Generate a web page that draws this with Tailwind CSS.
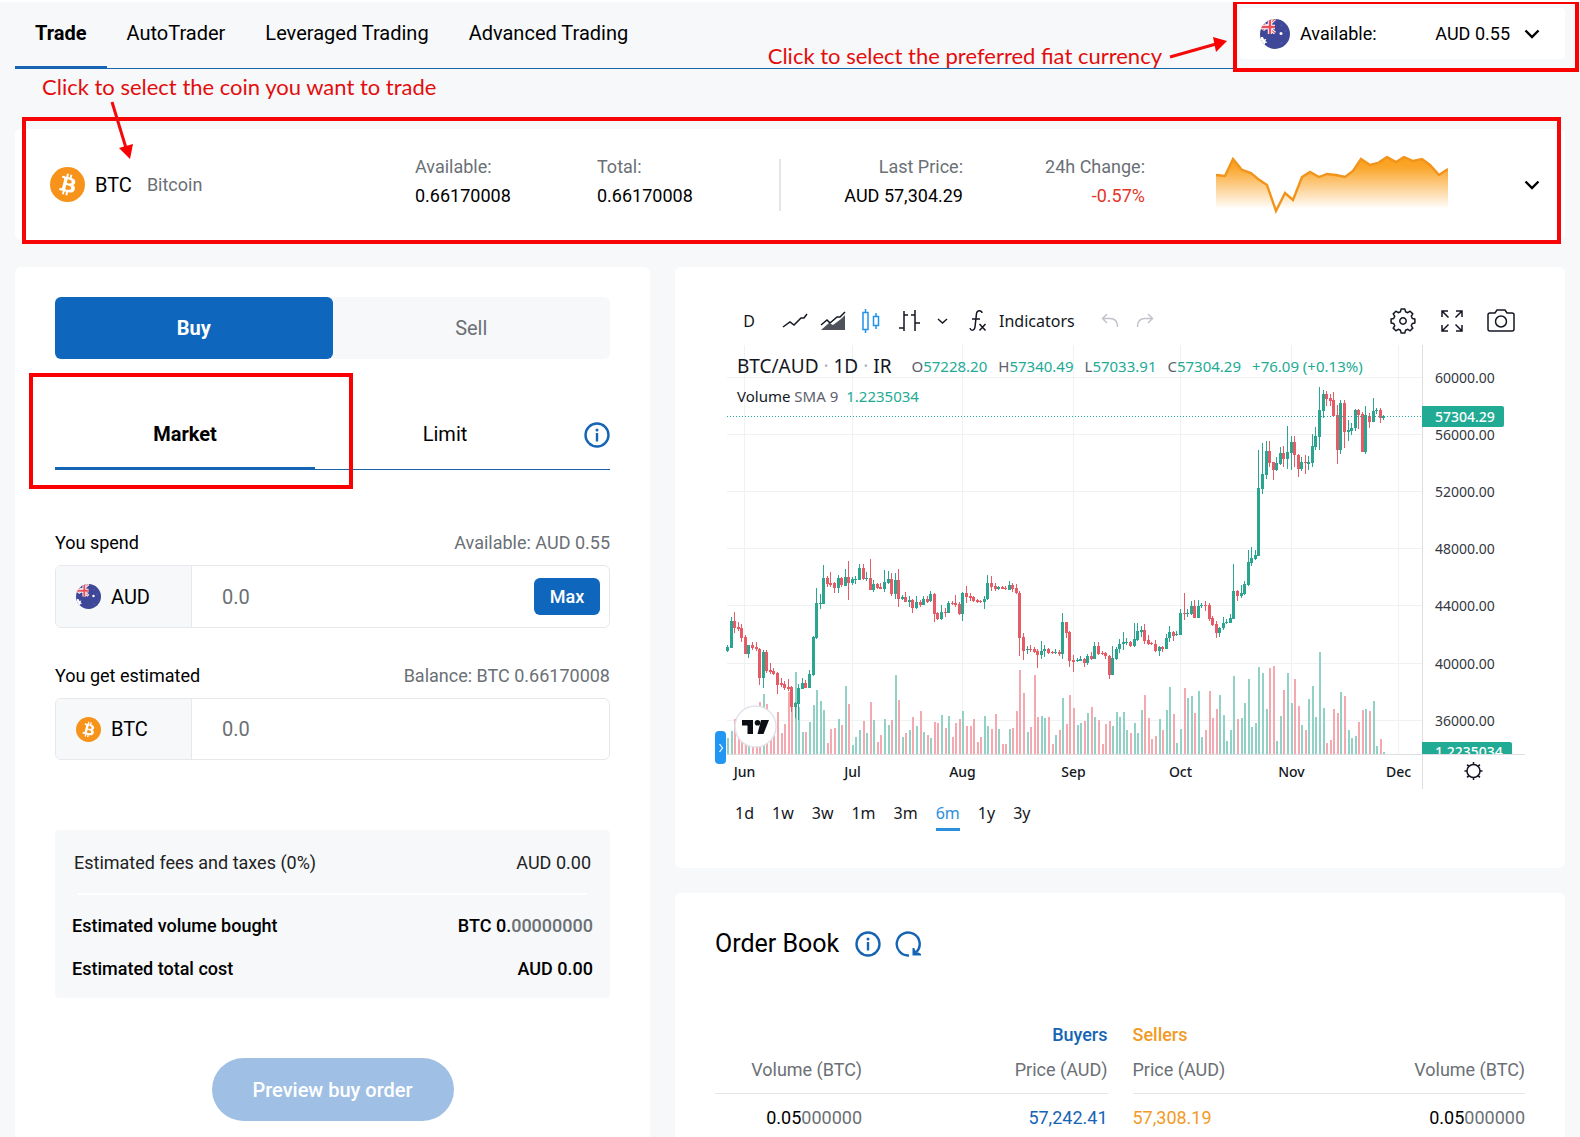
<!DOCTYPE html>
<html lang="en">
<head>
    <meta charset="UTF-8">
    <meta name="viewport" content="width=device-width, initial-scale=1.0">
    <title>Trade BTC/AUD</title>
    <script src="https://cdn.jsdelivr.net/npm/@tailwindcss/browser@4"></script>
</head>
<body class="bg-[#f6f8fa] min-h-screen border-t-2 border-white font-['Roboto',sans-serif] text-lg text-black">

    <!-- shared icons -->
    <svg class="hidden">
        <symbol id="icon-btc" viewBox="0 0 32 32">
            <circle cx="16" cy="16" r="16" fill="#f7931a"/>
            <path fill="#fff" d="M23.189 14.02c.314-2.096-1.283-3.223-3.465-3.975l.708-2.84-1.728-.43-.69 2.765c-.454-.114-.92-.22-1.385-.326l.695-2.783L15.596 6l-.708 2.839c-.376-.086-.746-.17-1.104-.26l.002-.009-2.384-.595-.46 1.846s1.283.294 1.256.312c.7.175.826.638.805 1.006l-.806 3.235c.048.012.11.03.18.057l-.183-.045-1.13 4.532c-.086.212-.303.531-.793.41.018.025-1.256-.313-1.256-.313l-.858 1.978 2.25.561c.418.105.828.215 1.231.318l-.715 2.872 1.727.43.708-2.84c.472.127.93.245 1.378.357l-.706 2.828 1.728.43.715-2.866c2.948.558 5.164.333 6.097-2.333.752-2.146-.037-3.385-1.588-4.192 1.13-.26 1.98-1.003 2.207-2.538zm-3.95 5.538c-.533 2.147-4.148.986-5.32.695l.95-3.805c1.172.293 4.929.872 4.37 3.11zm.535-5.569c-.487 1.953-3.495.96-4.47.717l.86-3.45c.975.243 4.118.696 3.61 2.733z"/>
        </symbol>
        <symbol id="icon-aud" viewBox="0 0 30 30">
            <rect width="30" height="30" fill="#3f4798"/>
            <path d="M0 2l15 12M15 0L3 11" stroke="#fff" stroke-width="3"/>
            <path d="M0 2l15 12M15 0L3 11" stroke="#e25b68" stroke-width="1.2"/>
            <path d="M10 0v15M0 8h15" stroke="#fff" stroke-width="4.4"/>
            <path d="M10 0v15M0 8h15" stroke="#e8505b" stroke-width="2.4"/>
            <path d="M3 18l1 2.400 2.400-.6-1 2.200 2 1.400-2.400.6v2.400L3 24.800l-2 1.600V18z" fill="#fff"/>
            <circle cx="21" cy="14.500" r="1.500" fill="#fff"/>
            <circle cx="25.500" cy="12" r=".7" fill="#5f69b4"/>
            <circle cx="21.500" cy="24" r=".8" fill="#5f69b4"/>
            <circle cx="21.500" cy="6.500" r=".8" fill="#5f69b4"/>
        </symbol>
        <symbol id="icon-info" viewBox="0 0 26 26">
            <circle cx="13" cy="13" r="11.500" fill="none" stroke="#1565b4" stroke-width="2.400"/>
            <circle cx="13" cy="8" r="1.500" fill="#1565b4"/>
            <path d="M13 11v8.500" stroke="#1565b4" stroke-width="2.400"/>
        </symbol>
        <symbol id="icon-chevron" viewBox="0 0 16 10">
            <path d="M1.500 1.500L8 8l6.500-6.500" fill="none" stroke="#000" stroke-width="2.400"/>
        </symbol>
    </svg>

    <header class="relative flex items-start px-[15px]">
        <nav class="flex-1 mr-[7px] h-[67px] flex items-end border-b border-[#1565a8] text-xl">
            <a href="#" aria-current="page" class="h-[67px] px-5 pt-[17px] -mb-px border-b-3 border-[#1565b4] font-bold">Trade</a>
            <a href="#" class="h-[67px] px-5 pt-[17px] -mb-px">AutoTrader</a>
            <a href="#" class="h-[67px] px-5 pt-[17px] -mb-px">Leveraged Trading</a>
            <a href="#" class="h-[67px] px-5 pt-[17px] -mb-px">Advanced Trading</a>
        </nav>
        <div class="relative mt-[6px]">
            <button type="button" class="w-[325px] h-[51px] bg-white rounded flex items-center pl-5 pr-[25px]">
                <svg class="size-[30px] rounded-full"><use href="#icon-aud"/></svg>
                <span class="ml-[10px]">Available:</span>
                <span class="ml-auto">AUD 0.55</span>
                <svg class="w-4 h-[10px] ml-[14px]"><use href="#icon-chevron"/></svg>
            </button>
            <div class="absolute -top-2 -bottom-[13px] -left-[7px] -right-[14px] border-4 border-[#fb0000] pointer-events-none"></div>
        </div>

        <!-- help notes -->
        <p class="absolute left-[42px] top-[69px] leading-8 text-[22px] font-['Lato',sans-serif] text-[#e30d0d] whitespace-nowrap">Click to select the coin you want to trade</p>
        <p class="absolute right-[418px] top-[38px] leading-8 text-[22px] font-['Lato',sans-serif] text-[#e30d0d] whitespace-nowrap">Click to select the preferred fiat currency</p>
        <svg class="absolute left-[110px] top-[98px] w-6 h-[60px] z-10" viewBox="0 0 24 60">
            <path d="M2 2l14 46" stroke="#f40a0a" stroke-width="3"/>
            <path d="M9 48l14-4-3 15z" fill="#fb0000"/>
        </svg>
        <svg class="absolute right-[352px] top-[34px] w-[60px] h-6" viewBox="0 0 60 24">
            <path d="M2 21l46-13" stroke="#f40a0a" stroke-width="3"/>
            <path d="M45 1l14 4-11 11z" fill="#fb0000"/>
        </svg>
    </header>

    <main class="px-[15px] mt-[60px]">
        <section class="relative h-[111px] bg-white rounded-md pl-[35px] pr-[25px] grid items-center grid-cols-[365fr_182fr_182fr_2px_182fr_182fr_303fr_92fr]">
            <div class="flex items-center">
                <svg class="size-[35px]"><use href="#icon-btc"/></svg>
                <span class="ml-[10px] text-xl">BTC</span>
                <span class="ml-[15px] text-[#6b7075]">Bitcoin</span>
            </div>
            <div class="pb-2">
                <p class="leading-[29px] text-[#6b7075]">Available:</p>
                <p class="leading-[29px]">0.66170008</p>
            </div>
            <div class="pb-2">
                <p class="leading-[29px] text-[#6b7075]">Total:</p>
                <p class="leading-[29px]">0.66170008</p>
            </div>
            <div class="h-[52px] bg-[#e4e5e7]"></div>
            <div class="pb-2 text-right">
                <p class="leading-[29px] text-[#6b7075]">Last Price:</p>
                <p class="leading-[29px]">AUD 57,304.29</p>
            </div>
            <div class="pb-2 text-right">
                <p class="leading-[29px] text-[#6b7075]">24h Change:</p>
                <p class="leading-[29px] text-[#e53528]">-0.57%</p>
            </div>
            <svg class="ml-auto w-[232px] h-[58px]" viewBox="0 0 232 58">
                <linearGradient id="spark" x1="0" y1="0" x2="0" y2="1">
                    <stop offset="0" stop-color="#fb9f16"/>
                    <stop offset=".2" stop-color="#fba62c"/>
                    <stop offset="1" stop-color="#fff"/>
                </linearGradient>
                <path fill="url(#spark)" d="M0 53V19L9 20L17 3L26 14L35 17L42 23L51 29L58 53H62L69 37L77 44L86 21L94 16L103 21L111 18L120 19L129 21L137 15L145 3L154 9L162 7L171 1L180 6L188 1L197 5L206 3L214 9L223 19L232 13V53Z"/>
                <path fill="none" stroke="#f0941c" stroke-width="2.400" d="M0 19L9 20L17 3L26 14L35 17L42 23L51 29L60 55L69 37L77 44L86 21L94 16L103 21L111 18L120 19L129 21L137 15L145 3L154 9L162 7L171 1L180 6L188 1L197 5L206 3L214 9L223 19L232 13"/>
            </svg>
            <button type="button" aria-label="Select coin" class="justify-self-end"><svg class="w-4 h-[10px]"><use href="#icon-chevron"/></svg></button>
            <div class="absolute -top-3 -bottom-1 left-[7px] right-1 border-4 border-[#f60606] pointer-events-none"></div>
        </section>

        <div class="mt-[27px] grid grid-cols-[635fr_890fr] gap-[25px]">
            <!-- order form -->
            <form class="bg-white rounded-md px-10 pt-[30px] pb-10">
                <div class="grid grid-cols-2 h-[62px] rounded-md bg-[#f6f8fa] text-xl">
                    <button type="button" class="rounded-md bg-[#0f66bd] text-white font-bold">Buy</button>
                    <button type="button" class="text-[#6b7075]">Sell</button>
                </div>

                <div class="relative mt-10 h-[71px] flex border-b border-[#1565a8] text-xl">
                    <button type="button" class="w-[260px] pt-[2px] -mb-px border-b-3 border-[#1565b4] font-bold">Market</button>
                    <button type="button" class="w-[260px] pt-[2px] border-b-2 border-transparent">Limit</button>
                    <button type="button" aria-label="Order type info" class="ml-auto pt-[2px]"><svg class="size-[26px]"><use href="#icon-info"/></svg></button>
                    <div class="absolute -left-[26px] -top-[26px] w-[324px] h-[116px] border-4 border-[#fb0000] pointer-events-none"></div>
                </div>

                <div class="mt-[57px] flex justify-between leading-8">
                    <label for="spend">You spend</label>
                    <span class="text-[#6b7075]">Available: AUD 0.55</span>
                </div>
                <div class="mt-[6px] h-[63px] flex items-center border border-[#e6e8eb] rounded-md overflow-hidden text-xl">
                    <div class="w-[136px] h-full flex items-center pl-5 bg-[#f6f8fa] border-r border-[#e6e8eb]">
                        <svg class="size-[25px] rounded-full"><use href="#icon-aud"/></svg>
                        <span class="ml-[10px]">AUD</span>
                    </div>
                    <input type="text" id="spend" placeholder="0.0" class="flex-1 min-w-0 h-full pl-[30px] placeholder-[#6b7075] outline-none">
                    <button type="button" class="w-[66px] h-[37px] mr-[9px] rounded-md bg-[#0f66bd] text-white text-lg font-medium">Max</button>
                </div>

                <div class="mt-8 flex justify-between leading-8">
                    <label for="receive">You get estimated</label>
                    <span class="text-[#6b7075]">Balance: BTC 0.66170008</span>
                </div>
                <div class="mt-[6px] h-[62px] flex items-center border border-[#e6e8eb] rounded-md overflow-hidden text-xl">
                    <div class="w-[136px] h-full flex items-center pl-5 bg-[#f6f8fa] border-r border-[#e6e8eb]">
                        <svg class="size-[25px]"><use href="#icon-btc"/></svg>
                        <span class="ml-[10px]">BTC</span>
                    </div>
                    <input type="text" id="receive" placeholder="0.0" class="flex-1 min-w-0 h-full pl-[30px] placeholder-[#6b7075] outline-none">
                </div>

                <div class="mt-[70px] rounded bg-[#f6f8fa] px-[17px] pt-[17px] pb-2">
                    <div class="flex justify-between px-[2px] leading-8 text-[#222]">
                        <span>Estimated fees and taxes (0%)</span>
                        <span>AUD 0.00</span>
                    </div>
                    <div class="mx-[6px] mt-[14px] mb-[9px] h-[2px] bg-white"></div>
                    <div class="flex justify-between leading-[43px] font-medium">
                        <span>Estimated volume bought</span>
                        <span>BTC 0.<span class="text-[#6b7075]">00000000</span></span>
                    </div>
                    <div class="flex justify-between leading-[43px] font-medium">
                        <span>Estimated total cost</span>
                        <span>AUD 0.00</span>
                    </div>
                </div>

                <button type="submit" class="block mx-auto mt-[60px] w-[242px] h-[63px] rounded-full bg-[#9fc0e4] text-white text-xl font-medium">Preview buy order</button>
            </form>

            <div class="min-w-0">
                <!-- price chart -->
                <section class="bg-white rounded-md px-10 pt-8 pb-[37px] font-['Noto_Sans',sans-serif] text-[#131722]">
                    <div class="flex items-center h-11 text-base">
                        <button type="button" class="ml-[15px] mr-2 w-[38px]">D</button>
                        <button type="button" aria-label="Line" class="w-[38px] grid place-items-center">
                            <svg width="26" height="20" fill="none" stroke="#131722" stroke-width="1.500"><path d="M1 16l7-5 4 3 7-7h3l3-4"/></svg>
                        </button>
                        <button type="button" aria-label="Area" class="w-[38px] grid place-items-center">
                            <svg width="26" height="20" stroke="#131722">
                                <pattern id="hatch" width="2" height="2" patternUnits="userSpaceOnUse" patternTransform="rotate(-45)"><path d="M0 1h3" stroke-width="1.300"/></pattern>
                                <path d="M1 19l8-7 4 2 8-6 4-4v15z" fill="url(#hatch)" stroke="none"/>
                                <path d="M1 14l6-5 3 3 7-6h3l5-5" fill="none" stroke-width="1.500"/>
                            </svg>
                        </button>
                        <button type="button" aria-label="Candles" class="w-[38px] grid place-items-center">
                            <svg width="20" height="26" fill="none" stroke="#2393ea" stroke-width="1.500"><path d="M2 4.500h5v17H2zM4.500 1v3.500M4.500 21.500V25M12.500 8.500h5v9h-5zM15 5v3.500M15 17.500V21"/></svg>
                        </button>
                        <button type="button" aria-label="Bars" class="w-[38px] grid place-items-center">
                            <svg width="22" height="24" fill="none" stroke="#131722" stroke-width="1.500"><path d="M1 19h5M6 2v20M6 6h4M13 6h4M17 1v21M17 14h5"/></svg>
                        </button>
                        <button type="button" aria-label="More styles" class="w-7 grid place-items-center">
                            <svg width="11" height="7" fill="none" stroke="#131722" stroke-width="1.400"><path d="M1 1l4.500 4L10 1"/></svg>
                        </button>
                        <button type="button" class="ml-[13px] flex items-center gap-3">
                            <svg width="18" height="24" fill="none" stroke="#131722" stroke-width="1.500"><path d="M13 4c0-3-5-3-5.500.500L6 18c-.5 4-4.500 4-5 1M3 10h8M10.500 15l6 6.500M16.500 15l-6 6.500"/></svg>
                            <span>Indicators</span>
                        </button>
                        <button type="button" aria-label="Undo" class="ml-[18px] w-[35px] grid place-items-center" disabled>
                            <svg width="18" height="16" fill="none" stroke="#c1c4cb" stroke-width="1.500"><path d="M6 1L1.500 5.500 6 10M1.500 5.500H9c5 0 7.500 3 7.500 8.500"/></svg>
                        </button>
                        <button type="button" aria-label="Redo" class="w-[35px] grid place-items-center" disabled>
                            <svg width="18" height="16" fill="none" stroke="#c1c4cb" stroke-width="1.500"><path d="M12 1l4.500 4.500L12 10M16.500 5.500H9c-5 0-7.500 3-7.500 8.500"/></svg>
                        </button>
                        <button type="button" aria-label="Settings" class="ml-auto w-[49px] grid place-items-center">
                            <svg width="26" height="26" viewBox="-13 -13 26 26" fill="none" stroke="#131722" stroke-width="1.500" stroke-linejoin="round">
                                <path d="M-2.500-9.300L-1.900-11.900H1.900L2.500-9.300L4.800-8.300L7.100-9.800L9.800-7.100L8.300-4.800L9.300-2.500L11.900-1.900V1.900L9.300 2.500L8.300 4.800L9.800 7.100L7.100 9.800L4.800 8.300L2.500 9.300L1.900 11.900H-1.900L-2.500 9.300L-4.800 8.300L-7.100 9.800L-9.800 7.100L-8.300 4.800L-9.300 2.500L-11.900 1.900V-1.900L-9.300-2.500L-8.300-4.800L-9.800-7.100L-7.100-9.800L-4.800-8.300Z"/>
                                <circle r="3.200"/>
                            </svg>
                        </button>
                        <button type="button" aria-label="Fullscreen" class="w-[49px] grid place-items-center">
                            <svg width="22" height="22" fill="none" stroke="#131722" stroke-width="1.500"><path d="M1 7V1h6M1 1l6.500 6.500M15 1h6v6M21 1l-6.500 6.500M1 15v6h6M1 21l6.500-6.500M15 21h6v-6M21 21l-6.500-6.500"/></svg>
                        </button>
                        <button type="button" aria-label="Screenshot" class="w-[49px] grid place-items-center">
                            <svg width="28" height="24" fill="none" stroke="#131722" stroke-width="1.500"><path d="M3 4h5l2-3h8l2 3h5a2 2 0 0 1 2 2v14a2 2 0 0 1-2 2H3a2 2 0 0 1-2-2V6a2 2 0 0 1 2-2z"/><circle cx="14" cy="12.500" r="5.500"/></svg>
                        </button>
                    </div>

                    <div class="relative mt-[2px]">
                        <svg class="block w-full" viewBox="0 0 810 444">
                            <g id="grid" stroke="#f0f1f2" stroke-width="1"></g>
                            <g id="candles" transform="scale(.33333)" shape-rendering="crispEdges"></g>
                            <path d="M12 71.500H707" stroke="#26a69a" stroke-width="1" stroke-dasharray="1 2"/>
                            <path d="M707.500 0v444M12 409.500h798" stroke="#dcdee2" stroke-width="1" fill="none"/>
                            <path d="M707 61h80a2 2 0 0 1 2 2v17a2 2 0 0 1-2 2h-80zM707 397h88a2 2 0 0 1 2 2v10h-90z" fill="#22ab94"/>
                            <clipPath id="vol-clip"><path d="M707 397h103v12H707z"/></clipPath>
                            <g id="prices" class="text-[14px]" fill="#333842"></g>
                            <text x="720" y="77" class="text-[14px] font-medium" fill="#fff">57304.29</text>
                            <text x="720" y="412" class="text-[14px] font-medium" fill="#fff" clip-path="url(#vol-clip)">1.2235034</text>
                            <g id="months" class="text-[14px] font-medium" fill="#131722" text-anchor="middle"></g>

                            <circle cx="40.500" cy="381.500" r="20.500" fill="#fff" stroke="#e0e3eb" stroke-width="1.500"/>
                            <path d="M27 375h11v14h-5.500v-8.500H27zM46 375h8l-5.500 14h-6z" fill="#0c0e15"/>
                            <circle cx="42.500" cy="377.800" r="2.800" fill="#0c0e15"/>

                            <rect x="0" y="386" width="11" height="33" rx="4" fill="#2196f3"/>
                            <path d="M4.500 399l3 4-3 4" fill="none" stroke="#fff" stroke-width="1.200"/>
                            <g transform="translate(758.500 426)" fill="none" stroke="#131722" stroke-width="1.500">
                                <circle r="6.500"/>
                                <path d="M0-6.500V-9M0 6.500V9M-6.500 0H-9M6.500 0H9M-4.600-4.600l-1.800-1.800M4.600 4.600l1.800 1.800M4.600-4.600l1.800-1.800M-4.600 4.600l-1.800 1.800"/>
                            </g>
                        </svg>

                        <div class="absolute left-[22px] top-[6px] flex items-center whitespace-nowrap text-[15px] leading-[30px]">
                            <span class="text-[19px] mr-5">BTC/AUD <span class="text-[#b2b5be]">·</span> 1D <span class="text-[#b2b5be]">·</span> IR</span>
                            <span class="text-[#5d606b] mr-[11px]">O<span class="text-[#22ab94]">57228.20</span></span>
                            <span class="text-[#5d606b] mr-[11px]">H<span class="text-[#22ab94]">57340.49</span></span>
                            <span class="text-[#5d606b] mr-[11px]">L<span class="text-[#22ab94]">57033.91</span></span>
                            <span class="text-[#5d606b] mr-[11px]">C<span class="text-[#22ab94]">57304.29</span></span>
                            <span class="text-[#22ab94]">+76.09 (+0.13%)</span>
                        </div>
                        <div class="absolute left-[22px] top-[36px] whitespace-nowrap text-[15px] leading-[30px]">
                            Volume <span class="text-[#5d606b] mr-2">SMA 9</span><span class="text-[#22ab94]">1.2235034</span>
                        </div>
                    </div>

                    <div class="mt-[9px] ml-5 flex gap-[18px] text-base leading-[30px]">
                        <button type="button" class="border-b-3 border-transparent">1d</button>
                        <button type="button" class="border-b-3 border-transparent">1w</button>
                        <button type="button" class="border-b-3 border-transparent">3w</button>
                        <button type="button" class="border-b-3 border-transparent">1m</button>
                        <button type="button" class="border-b-3 border-transparent">3m</button>
                        <button type="button" class="border-b-3 border-[#2e8fdc] text-[#2e8fdc]">6m</button>
                        <button type="button" class="border-b-3 border-transparent">1y</button>
                        <button type="button" class="border-b-3 border-transparent">3y</button>
                    </div>
                </section>

                <!-- order book -->
                <section class="mt-[25px] bg-white rounded-md px-10 pt-[35px] pb-10">
                    <div class="flex items-center h-8">
                        <h2 class="text-[25px]">Order Book</h2>
                        <button type="button" aria-label="Order book info" class="ml-4"><svg class="size-[26px]"><use href="#icon-info"/></svg></button>
                        <button type="button" aria-label="Refresh" class="ml-[14px]">
                            <svg class="size-[26px]" viewBox="0 0 26 26" fill="none" stroke="#1565b4" stroke-width="2.400"><path d="M14 24.500A11.500 11.500 0 1 1 21.500 21"/><path d="M18.500 17v6.500H25l-2.500-1.500" fill="#1565b4" stroke-width="2"/></svg>
                        </button>
                    </div>

                    <div class="mt-[59px] grid grid-cols-2 gap-[25px]">
                        <table class="w-full text-right">
                            <caption class="text-right leading-8 font-medium text-[#1565b4]">Buyers</caption>
                            <thead class="text-[#6b7075] border-b border-[#e4e6e9]">
                                <tr>
                                    <th class="w-[147px] h-[42px] pb-1 font-normal">Volume (BTC)</th>
                                    <th class="pb-1 font-normal">Price (AUD)</th>
                                </tr>
                            </thead>
                            <tbody>
                                <tr>
                                    <td class="h-[50px]">0.05<span class="text-[#6b7075]">000000</span></td>
                                    <td class="text-[#1565b4]">57,242.41</td>
                                </tr>
                            </tbody>
                        </table>
                        <table class="w-full">
                            <caption class="text-left leading-8 font-medium text-[#f39a26]">Sellers</caption>
                            <thead class="text-[#6b7075] border-b border-[#e4e6e9]">
                                <tr>
                                    <th class="h-[42px] pb-1 font-normal text-left">Price (AUD)</th>
                                    <th class="pb-1 font-normal text-right">Volume (BTC)</th>
                                </tr>
                            </thead>
                            <tbody>
                                <tr>
                                    <td class="h-[50px] text-[#f39a26]">57,308.19</td>
                                    <td class="text-right">0.05<span class="text-[#6b7075]">000000</span></td>
                                </tr>
                            </tbody>
                        </table>
                    </div>
                </section>
            </div>
        </div>
    </main>

    <script>
        // candle: g/r, body top, body bottom, wick top, wick bottom, volume top
        // each block has its own price and volume offset
        const blocks = [
            { price: 525, volume: 525, rows: `
                g 381 392 376 395 655,g 303 383 291 384 633,r 303 323 276 338 597,r 320 326 306 334 640,r 324 353 312 366 620,
                r 350 402 345 403 600,g 376 402 374 414 620,r 374 384 367 390 620,r 381 387 366 392 600,r 386 473 384 495 545,
                g 396 474 389 504 522,r 396 453 391 458 551,r 451 457 430 462 600,r 454 462 444 464 620,r 459 495 456 522 576,
                r 490 495 474 502 640,r 492 504 483 510 612,r 500 507 477 514 515,r 502 560 498 575 560,g 549 560 545 594 456,
                g 503 552 492 600 560,g 488 506 473 508 636,r 489 503 480 504 636,g 462 503 450 504 606,g 351 465 348 468 555,
                g 250 354 205 358 510,g 248 252 222 266 543,g 175 252 135 253 570,r 175 192 168 200 669,r 188 195 156 200 627,
                r 190 205 185 220 625,g 174 205 165 218 597,r 175 195 170 200 615,g 170 197 148 198 498,r 171 189 123 240 551,
                g 176 189 170 195 675,g 176 181 168 192 651,g 144 180 132 181 630,r 144 177 132 180 603,g 173 178 157 182 639,
                r 174 209 117 211 546,g 192 209 180 215 600,r 192 203 188 207 666,r 201 206 190 208 645,g 186 206 150 215 597,
                g 178 190 153 192 615,r 178 221 159 228 600,g 180 223 160 236 465,r 180 237 147 262 540,g 231 237 226 240 651,
                r 232 245 215 247 639,g 239 246 228 260 630,r 240 265 236 280 591,g 247 265 228 266 618,r 246 255 240 262 573,
                g 237 254 228 256 636,r 238 245 229 250 645,g 222 244 213 246 654,r 222 281 220 306 606,r 279 298 277 300 609,
                g 276 298 255 300 585,r 275 279 265 290 624,g 249 279 243 280 588,r 248 252 243 256 651,r 250 254 225 262 609,
                r 252 282 247 284 597,g 219 282 217 303 573,r 219 232 198 250 618,r 229 235 220 243 618,r 232 243 228 247 597,
                r 241 245 238 248 666,r 243 247 240 250 651,g 237 247 228 266 588,g 189 238 165 240 618,r 189 202 168 213 627,
                r 198 208 190 212 582,g 201 207 198 210 627,r 202 206 198 208 672,r 203 207 198 209 672,g 194 209 183 211 627,
                r 196 206 190 216 624,r 203 219 192 222 573,r 219 353 214 408 450,r 350 392 340 420 519,g 386 390 377 402 636,
                r 387 390 376 397 621,r 386 396 380 400 465,r 392 405 387 443 591,g 392 405 363 417 588,g 388 393 374 410 594,
                r 388 400 385 402 591,r 396 400 392 403 672,g 396 400 388 402 645,r 396 402 390 408 630` },
            { price: 735, volume: 735, rows: `
                g 97 191 68 207 324,r 97 128 96 143 402,r 127 213 122 230 315,r 210 216 195 246 354,g 210 214 205 217 405,
                g 207 212 198 214 400,r 207 219 205 230 393,g 199 219 193 225 369,r 199 206 187 210 351,g 168 207 156 208 381,
                r 168 191 156 196 390,r 188 191 184 195 462,r 189 199 186 208 402,r 198 254 195 267 393,g 204 254 168 255 408,
                g 177 206 171 210 366,g 162 178 147 188 381,g 156 163 126 180 366,g 155 159 145 165 420,r 155 168 152 170 429,
                g 148 168 99 170 400,g 122 150 99 152 430,g 120 125 108 142 360,r 120 152 102 162 315,r 151 161 136 165 384,
                r 159 163 156 166 447,r 162 183 150 186 438,g 171 183 168 198 387,r 171 177 168 186 420,g 145 177 132 178 360,
                g 126 145 108 156 291,r 126 137 122 153 372,g 132 136 123 138 459,g 68 134 57 135 417,r 69 72 9 90 294,
                g 68 72 57 80 324,g 48 72 33 75 318,r 48 83 30 84 369,g 48 83 30 84 303,g 45 49 40 54 441,
                r 45 48 33 63 420,r 45 86 40 92 303,r 84 104 78 108 384,r 102 128 93 143 357,g 114 128 111 140 315,
                g 99 115 81 119 375,g 96 100 86 102 453,g 84 98 72 100 420,g 3 87 -78 88 258,r 2 17 0 32 387` },
            { price: 75, volume: 735, rows: `
                g 669 678 645 684 384,g 642 672 633 675 339,g 576 645 540 648 267,g 563 578 531 588 411,g 555 567 540 570 399,
                g 354 557 240 558 231,g 312 357 219 372 249,g 243 314 213 327 357,r 243 280 213 291 234,r 276 300 275 330 228,
                g 279 300 261 303 453,g 249 283 231 285 378,r 249 266 229 291 300,g 247 266 168 297 249,g 216 249 198 300 339,
                r 216 256 198 291 267,r 254 297 252 321 348,g 276 297 261 303 405,r 276 280 255 312 420,g 277 282 258 300 327,
                g 228 280 192 291 288,g 198 231 171 240 381,g 120 201 51 240 186,g 72 123 60 144 354,r 72 86 63 108 459,
                r 84 93 72 108 450,r 90 138 66 140 357,r 135 240 105 282 369,g 99 240 90 252 306,r 99 186 90 234 318,
                g 180 186 150 213 420,g 174 183 159 195 444,g 120 174 118 183 438,r 120 136 117 177 396,r 131 245 126 246 360,
                g 135 245 108 252 357,r 138 156 129 174 363,g 123 156 84 157 333,g 120 124 114 132 468,r 120 144 114 159 447,
                g 138 143 135 150 486` },
        ];

        const STEP = 10.7;
        let index = 0;
        let volumes = "";
        let bodies = "";
        for (const block of blocks) {
            for (const row of block.rows.trim().split(/,\s*/)) {
                const [side, ...values] = row.split(" ");
                const [top, bottom, high, low] = values.slice(0, 4).map((v) => Number(v) + block.price);
                const vol = Number(values[4]) + block.volume;
                const x = 3 * Math.round((36 + index * STEP) / 3);
                const up = side === "g";
                volumes += `<rect x="${x}" y="${vol}" width="6" height="${1227 - vol}" fill="${up ? "#92d2c6" : "#f3a9af"}"/>`;
                bodies += `<path fill="${up ? "#2ba58f" : "#e65c66"}" d="M${x} ${high}h3V${low}h-3zM${x - 3} ${top}h9V${bottom}h-9z"/>`;
                index++;
            }
        }
        document.getElementById("candles").innerHTML = volumes + bodies;

        const months = { Jun: 29.5, Jul: 137.5, Aug: 247.5, Sep: 358.5, Oct: 465.5, Nov: 576.5, Dec: 683.5 };
        const prices = { "60000.00": 32.5, "56000.00": 89.5, "52000.00": 146.5, "48000.00": 203.5, "44000.00": 260.5, "40000.00": 318.5, "36000.00": 375.5 };
        let grid = "";
        for (const [name, x] of Object.entries(months)) {
            grid += `<path d="M${x} 0V409"/>`;
            document.getElementById("months").innerHTML += `<text x="${x}" y="432">${name}</text>`;
        }
        for (const [name, y] of Object.entries(prices)) {
            grid += `<path d="M12 ${y}H707"/>`;
            document.getElementById("prices").innerHTML += `<text x="720" y="${y + 5}">${name}</text>`;
        }
        document.getElementById("grid").innerHTML = grid;
    </script>

</body>
</html>
